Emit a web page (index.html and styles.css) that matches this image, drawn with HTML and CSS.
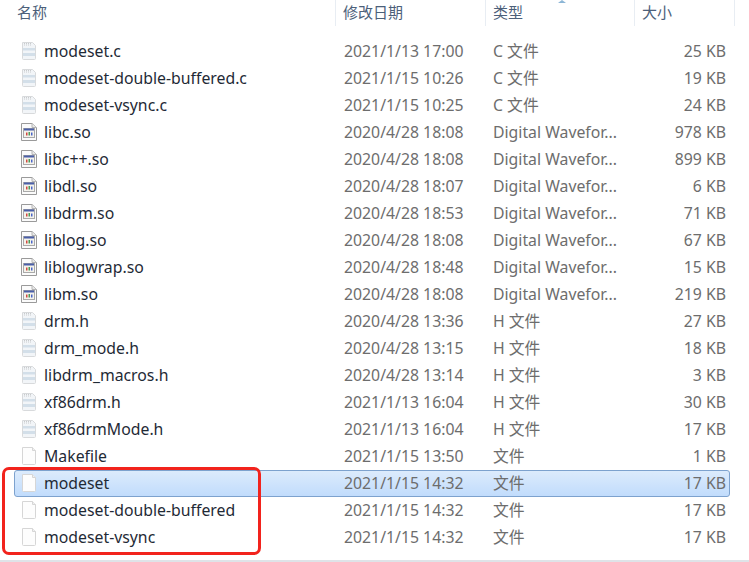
FILE: index.html
```html
<!DOCTYPE html>
<html lang="zh">
<head>
<meta charset="utf-8">
<title>Files</title>
<link rel="stylesheet" href="styles.css">
</head>
<body>
<svg class="defs" width="0" height="0" aria-hidden="true">
  <defs>
    <symbol id="i-text" viewBox="0 0 16 18">
      <path d="M1.5 .5H11.5L14.5 3.5V16.5a1 1 0 0 1-1 1H2.500a1 1 0 0 1-1-1Z" fill="#f2f5f8" stroke="#d8dadc"/>
      <path d="M2 6H14V8.500H2ZM2 11H14V14H2Z" fill="#d3dfe9"/>
      <path d="M3 1.500H11M3 3H10" stroke="#c9cbcd" stroke-dasharray="1 1"/>
    </symbol>
    <symbol id="i-app" viewBox="0 0 16 18">
      <path d="M.5 .5H11L15.500 4.500V17.500H.5Z" fill="#fbfbfb" stroke="#9a9a9a"/>
      <path d="M11 .5V4.500H15.500" fill="#e8e8e8" stroke="#b5b5b5"/>
      <rect x="2.500" y="5.500" width="11" height="9" fill="#f4f3ec" stroke="#a9a9a9"/>
      <rect x="3" y="5.500" width="10" height="2" fill="#4a5fa8"/>
      <rect x="5" y="9.500" width="1.500" height="3" fill="#d2493f"/>
      <rect x="7.500" y="9" width="1.500" height="3.500" fill="#4c9a56"/>
      <rect x="10" y="9.500" width="1.500" height="3" fill="#4a65c8"/>
    </symbol>
    <symbol id="i-blank" viewBox="0 0 16 18">
      <path d="M1.500 .5H11.500L14.500 3.500V16.500a1 1 0 0 1-1 1H2.500a1 1 0 0 1-1-1Z" fill="#fdfdfd" stroke="#d6d6d6"/>
      <path d="M11.500 .5V3.500H14.500" fill="#f0f0f0" stroke="#d6d6d6"/>
    </symbol>
  </defs>
</svg>
<main class="explorer">
  <header class="head">
    <div class="col-name">名称</div>
    <div class="col-date">修改日期</div>
    <div class="col-type">类型<span class="sort"></span></div>
    <div class="col-size">大小</div>
    <div class="col-end"></div>
  </header>
  <section class="list">
    <div class="row"><div class="name"><svg class="ic"><use href="#i-text"/></svg><span class="label">modeset.c</span></div><div class="date">2021/1/13 17:00</div><div class="type">C 文件</div><div class="size">25 KB</div></div>
    <div class="row"><div class="name"><svg class="ic"><use href="#i-text"/></svg><span class="label">modeset-double-buffered.c</span></div><div class="date">2021/1/15 10:26</div><div class="type">C 文件</div><div class="size">19 KB</div></div>
    <div class="row"><div class="name"><svg class="ic"><use href="#i-text"/></svg><span class="label">modeset-vsync.c</span></div><div class="date">2021/1/15 10:25</div><div class="type">C 文件</div><div class="size">24 KB</div></div>
    <div class="row"><div class="name"><svg class="ic"><use href="#i-app"/></svg><span class="label">libc.so</span></div><div class="date">2020/4/28 18:08</div><div class="type">Digital Wavefor...</div><div class="size">978 KB</div></div>
    <div class="row"><div class="name"><svg class="ic"><use href="#i-app"/></svg><span class="label">libc++.so</span></div><div class="date">2020/4/28 18:08</div><div class="type">Digital Wavefor...</div><div class="size">899 KB</div></div>
    <div class="row"><div class="name"><svg class="ic"><use href="#i-app"/></svg><span class="label">libdl.so</span></div><div class="date">2020/4/28 18:07</div><div class="type">Digital Wavefor...</div><div class="size">6 KB</div></div>
    <div class="row"><div class="name"><svg class="ic"><use href="#i-app"/></svg><span class="label">libdrm.so</span></div><div class="date">2020/4/28 18:53</div><div class="type">Digital Wavefor...</div><div class="size">71 KB</div></div>
    <div class="row"><div class="name"><svg class="ic"><use href="#i-app"/></svg><span class="label">liblog.so</span></div><div class="date">2020/4/28 18:08</div><div class="type">Digital Wavefor...</div><div class="size">67 KB</div></div>
    <div class="row"><div class="name"><svg class="ic"><use href="#i-app"/></svg><span class="label">liblogwrap.so</span></div><div class="date">2020/4/28 18:48</div><div class="type">Digital Wavefor...</div><div class="size">15 KB</div></div>
    <div class="row"><div class="name"><svg class="ic"><use href="#i-app"/></svg><span class="label">libm.so</span></div><div class="date">2020/4/28 18:08</div><div class="type">Digital Wavefor...</div><div class="size">219 KB</div></div>
    <div class="row"><div class="name"><svg class="ic"><use href="#i-text"/></svg><span class="label">drm.h</span></div><div class="date">2020/4/28 13:36</div><div class="type">H 文件</div><div class="size">27 KB</div></div>
    <div class="row"><div class="name"><svg class="ic"><use href="#i-text"/></svg><span class="label">drm_mode.h</span></div><div class="date">2020/4/28 13:15</div><div class="type">H 文件</div><div class="size">18 KB</div></div>
    <div class="row"><div class="name"><svg class="ic"><use href="#i-text"/></svg><span class="label">libdrm_macros.h</span></div><div class="date">2020/4/28 13:14</div><div class="type">H 文件</div><div class="size">3 KB</div></div>
    <div class="row"><div class="name"><svg class="ic"><use href="#i-text"/></svg><span class="label">xf86drm.h</span></div><div class="date">2021/1/13 16:04</div><div class="type">H 文件</div><div class="size">30 KB</div></div>
    <div class="row"><div class="name"><svg class="ic"><use href="#i-text"/></svg><span class="label">xf86drmMode.h</span></div><div class="date">2021/1/13 16:04</div><div class="type">H 文件</div><div class="size">17 KB</div></div>
    <div class="row"><div class="name"><svg class="ic"><use href="#i-blank"/></svg><span class="label">Makefile</span></div><div class="date">2021/1/15 13:50</div><div class="type">文件</div><div class="size">1 KB</div></div>
    <div class="row selected"><div class="name"><svg class="ic"><use href="#i-blank"/></svg><span class="label">modeset</span></div><div class="date">2021/1/15 14:32</div><div class="type">文件</div><div class="size">17 KB</div></div>
    <div class="row"><div class="name"><svg class="ic"><use href="#i-blank"/></svg><span class="label">modeset-double-buffered</span></div><div class="date">2021/1/15 14:32</div><div class="type">文件</div><div class="size">17 KB</div></div>
    <div class="row"><div class="name"><svg class="ic"><use href="#i-blank"/></svg><span class="label">modeset-vsync</span></div><div class="date">2021/1/15 14:32</div><div class="type">文件</div><div class="size">17 KB</div></div>
    <div class="annotation"></div>
  </section>
</main>
</body>
</html>
```
FILE: styles.css
```css
* { box-sizing: border-box; }
html, body { margin: 0; padding: 0; }
body {
  width: 749px;
  height: 562px;
  overflow: hidden;
  background: #fff;
  font-family: "Noto Sans", "Noto Sans CJK SC", sans-serif;
  font-size: 15.8px;
  color: #1f2a36;
}
.defs { position: absolute; }
.explorer {
  height: 562px;
  display: flex;
  flex-direction: column;
  border-bottom: 2px solid #dfe3e8;
}
.head {
  display: grid;
  grid-template-columns: 336px 150px 149px 100px 14px;
  height: 26px;
  font-size: 15px;
  line-height: 25px;
  color: #4c607a;
}
.head > div {
  position: relative;
  padding-left: 7px;
  border-right: 1px solid #e8edf3;
}
.head .col-name { padding-left: 17px; }
.head .col-end { border-right: 0; }
.sort {
  position: absolute;
  left: 72px;
  top: 0;
  width: 0;
  height: 0;
  border-left: 4px solid transparent;
  border-right: 4px solid transparent;
  border-bottom: 3px solid #8cb6d6;
}
.list {
  position: relative;
  padding: 12px 19px 0 14px;
}
.row {
  display: grid;
  grid-template-columns: 329px 149px 150px 83px;
  height: 27px;
  line-height: 25px;
  border: 1px solid transparent;
  color: #6d6d6d;
  white-space: nowrap;
}
.row .name {
  display: flex;
  align-items: center;
  gap: 7px;
  padding-left: 6px;
  color: #1f2a36;
}
.label { align-self: flex-start; }
.row .size { text-align: right; }
.ic { width: 16px; height: 18px; flex: none; margin-top: -1px; }
.selected {
  border: 1px solid #7da2ce;
  border-radius: 3px;
  background: linear-gradient(#dcebfc, #c1dcfc);
}
.annotation {
  position: absolute;
  left: 2px;
  top: 441px;
  width: 259px;
  height: 88px;
  border: 3px solid #f2231d;
  border-radius: 7px;
}
```
